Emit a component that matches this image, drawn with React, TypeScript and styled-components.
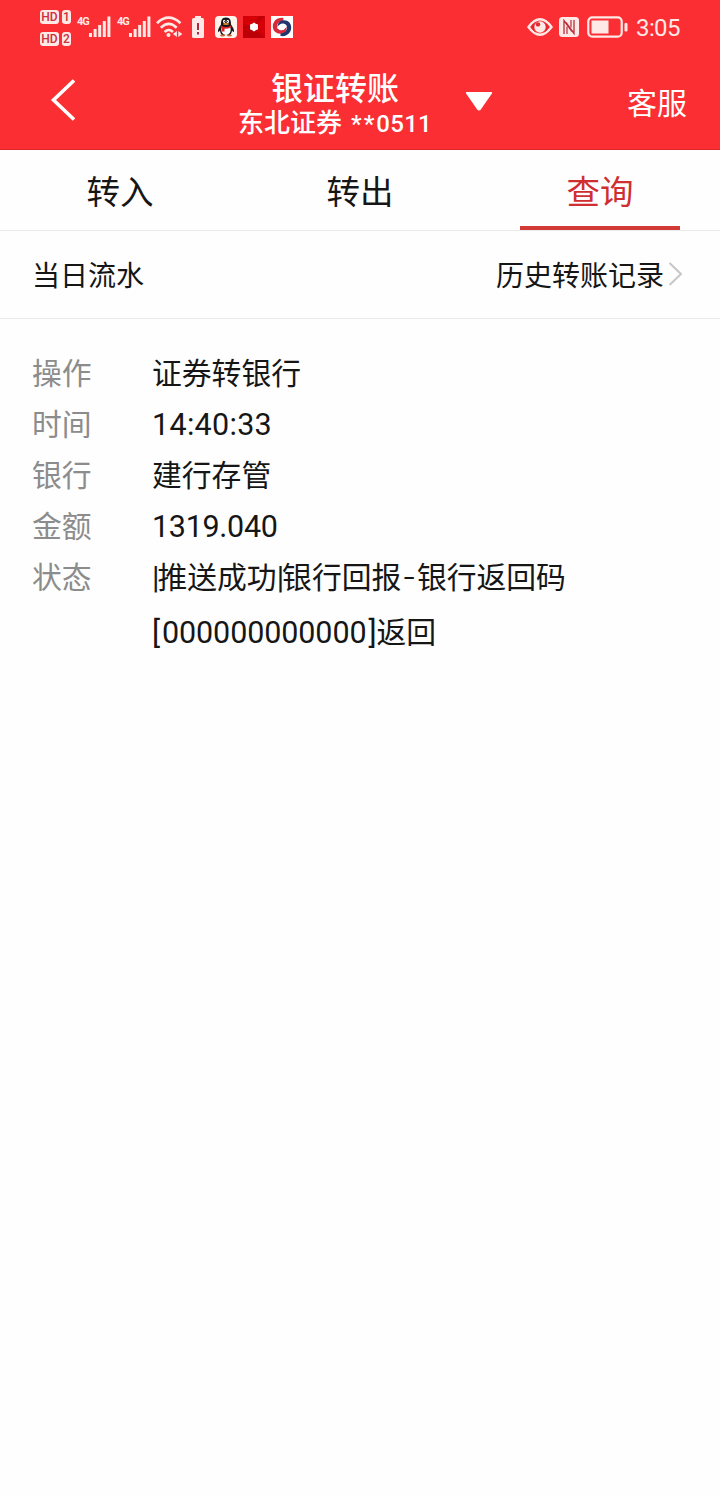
import React from "react";
import styled, { createGlobalStyle } from "styled-components";

const RED = "#fa2e33";
const PALE = "#ffe9e6";

const GlobalStyle = createGlobalStyle`
  *, *::before, *::after { box-sizing: border-box; }
  body {
    margin: 0;
    background: #fefefe;
    font-family: "Noto Sans CJK SC", "Noto Sans", sans-serif;
    color: #161616;
  }
`;

const Screen = styled.div`
  width: 720px;
  min-height: 1496px;
  background: #fefefe;
`;

const Top = styled.div`
  height: 150px;
  background: ${RED};
  border-bottom: 1px solid #d9272c;
`;

const StatusBar = styled.div`
  height: 54px;
  padding: 0 39px 0 40px;
  display: flex;
  justify-content: space-between;
`;

const StatusGroup = styled.div`
  display: flex;
  align-items: center;
  height: 54px;
`;

const Sims = styled.div`
  display: flex;
  flex-direction: column;
  gap: 8px;
  margin-top: 2px;
  width: 37px;
`;

const SimRow = styled.div`
  display: flex;
  gap: 3px;
`;

const Badge = styled.span<{ $w: number }>`
  width: ${(p) => p.$w}px;
  height: 14px;
  border-radius: 3px;
  background: ${PALE};
  color: #c9303a;
  font: 500 12px/14px Roboto, sans-serif;
  text-align: center;
`;

const Network = styled.div`
  display: flex;
  align-items: flex-start;
  height: 22px;
  width: 40px;
`;

const NetworkLabel = styled.span`
  width: 12px;
  font: 700 11px/12px Roboto, sans-serif;
  letter-spacing: -1px;
  color: ${PALE};
`;

const Icon = styled.svg<{ $ml?: number }>`
  display: block;
  flex: none;
  margin-left: ${(p) => p.$ml ?? 0}px;
`;

const Clock = styled.span`
  margin: 2px 0 0 8px;
  width: 45px;
  font: 400 24px/30px Roboto, sans-serif;
  letter-spacing: -0.6px;
  white-space: nowrap;
  color: ${PALE};
`;

const Header = styled.header`
  height: 95px;
  display: grid;
  grid-template-columns: 230px 210px 90px 1fr;
`;

const BackButton = styled.div`
  padding: 24px 0 0 50px;
`;

const Titles = styled.div`
  display: flex;
  flex-direction: column;
  align-items: center;
  font-weight: 500;
  color: #fff;
  white-space: nowrap;
`;

const Title = styled.h1`
  margin: 11px 0 0;
  font-size: 32px;
  line-height: 42px;
  font-weight: 500;
`;

const Subtitle = styled.div`
  display: flex;
  align-items: baseline;
  font-size: 26px;
  line-height: 30px;
  margin-top: -1px;
`;

const AccountNumber = styled.span`
  margin-left: 9px;
  font-family: Roboto, sans-serif;
  font-size: 24px;
  letter-spacing: 0.3px;
`;

const Mask = styled.span`
  letter-spacing: 2px;
`;

const DropButton = styled.div`
  padding: 37px 0 0 25px;
`;

const Service = styled.div`
  padding: 27px 33px 0 0;
  text-align: right;
  font-size: 30px;
  line-height: 40px;
  color: #fff;
`;

const Tabs = styled.nav`
  height: 81px;
  display: grid;
  grid-template-columns: repeat(3, 1fr);
  border-bottom: 1px solid #ebebeb;
`;

const Tab = styled.div<{ $active?: boolean }>`
  display: flex;
  justify-content: center;
  margin: 0 40px;
  padding-top: 16px;
  font-size: 33.5px;
  line-height: 48px;
  color: ${(p) => (p.$active ? "#cf2f30" : "#161616")};
  border-bottom: 4px solid ${(p) => (p.$active ? "#d23a35" : "transparent")};
`;

const Summary = styled.div`
  height: 88px;
  padding: 0 37px 2px 32px;
  display: flex;
  align-items: center;
  justify-content: space-between;
  font-size: 28px;
  border-bottom: 1px solid #ebebeb;
`;

const HistoryLink = styled.div`
  display: flex;
  align-items: center;
  gap: 4px;
`;

const Details = styled.dl`
  margin: 0;
  padding: 25px 32px 0;
`;

const DetailRow = styled.div`
  display: grid;
  grid-template-columns: 120px 430px;
  min-height: 51px;
  font-size: 29.8px;
  line-height: 55px;
`;

const Label = styled.dt`
  height: 51px;
  color: #8c8c8c;
`;

const Value = styled.dd<{ $fit?: boolean }>`
  margin: 0;
  height: ${(p) => (p.$fit ? "auto" : "51px")};
`;

const Line = styled.div`
  white-space: nowrap;
`;

const Latin = styled.span<{ $tracking?: number }>`
  font-family: Roboto, sans-serif;
  font-size: 30.5px;
  line-height: 1;
  letter-spacing: ${(p) => p.$tracking ?? 0}px;
`;

const Code = styled.span`
  margin: 0 2px;
`;

const Dash = styled.span`
  font-size: 38px;
  font-weight: 300;
  line-height: 1;
  margin: 0 1.5px;
`;

const Signal = () => (
  <Icon width="22" height="22" viewBox="0 0 22 22" fill={PALE}>
    <rect x="0" y="17" width="3" height="4" />
    <rect x="4.6" y="13" width="3" height="8" />
    <rect x="9.2" y="9" width="3" height="12" />
    <rect x="13.8" y="5" width="3" height="16" />
    <rect x="18.4" y="0.5" width="3" height="20.5" />
  </Icon>
);

const Wifi = () => (
  <Icon $ml={-1} width="27" height="22" viewBox="0 0 27 22" fill="none" stroke={PALE} strokeWidth="2.6">
    <path d="M1 7.2Q12.5-3.8 24.5 7.2" />
    <path d="M4.8 11.7Q12.7 4 20.7 11.7" />
    <path d="M8.6 16Q12.7 12 17 16" />
    <circle cx="12.5" cy="19" r="2" fill={PALE} stroke="none" />
    <path d="M20.9 15v6l-4-3zM22.3 15v6l4-3z" fill={PALE} stroke="none" />
  </Icon>
);

const LowBattery = () => (
  <Icon $ml={9} width="12" height="22" viewBox="0 0 12 22">
    <rect x="3" y="0" width="6" height="4" fill={PALE} />
    <rect y="2" width="12" height="20" rx="1.5" fill={PALE} />
    <path d="M6 7v7M6 16v2.4" stroke="#a52b48" strokeWidth="2" />
  </Icon>
);

const Penguin = () => (
  <Icon $ml={11} width="22" height="22" viewBox="0 0 22 22">
    <rect width="22" height="22" rx="4" fill="#fff5ec" />
    <path d="M11 1.5C6.500 1.500 6 5 6 8.500c-1.300 2-3 4.200-3 6.500 0 1.800 1.200.8 2-.5.3 2 1 3.500 2 4.500h8c1-1 1.700-2.500 2-4.500.8 1.300 2 2.300 2 .5 0-2.300-1.700-4.500-3-6.500 0-3.500-.5-7-5-7z" fill="#17151a" />
    <path d="M6.800 11c-1.500 4 .7 8 4.200 8s5.700-4 4.200-8z" fill="#fff" />
    <ellipse cx="9.200" cy="5.400" rx="1.200" ry="1.700" fill="#fff" />
    <ellipse cx="12.800" cy="5.400" rx="1.200" ry="1.700" fill="#fff" />
    <circle cx="9.500" cy="5.600" r=".5" fill="#111" />
    <circle cx="12.500" cy="5.600" r=".5" fill="#111" />
    <ellipse cx="11" cy="8" rx="3" ry=".9" fill="#e58a28" />
    <path d="M6 9.500q5 3 10 0l.5 1.800q-4 1.700-7 1.500v2.700H7v-3.500l-1.500-.7z" fill="#dc252a" />
    <ellipse cx="7.600" cy="19.600" rx="2.600" ry="1" fill="#c9683a" />
    <ellipse cx="14.400" cy="19.600" rx="2.600" ry="1" fill="#c9683a" />
  </Icon>
);

const RedApp = () => (
  <Icon $ml={6} width="22" height="22" viewBox="0 0 22 22">
    <rect width="22" height="22" fill="#d40007" />
    <path d="M0 22V8l11 3 5-11h6L11 11l11 11z" fill="#bd0008" />
    <path d="M11 6.600l1.800 1.200 2.200.8-.1 2.400.1 2.300-2.200.9L11 15.500l-1.800-1.300-2.200-.9.100-2.300-.1-2.400 2.200-.8z" fill="#fff" />
  </Icon>
);

const SwirlApp = () => (
  <Icon $ml={6} width="22" height="22" viewBox="0 0 22 22">
    <rect width="22" height="22" fill="#fff" />
    <path d="M12.500 2C6 1 1.800 5.500 1.800 10.500c0 4.300 3.400 7.500 7.700 7 3.500-.2 6-2.500 6-6.500-1.500 2.700-3.800 4-6 3.500C6.500 13.700 5.500 11.500 6.200 9 7 6.300 9.500 5.200 12 5.200z" fill="#d62a3b" />
    <path d="M9.500 20c6.500 1 10.700-3.500 10.700-8.500C20.200 7.200 17 4 12.500 4.300 9 4.500 6.500 7 6.500 11c1.500-2.700 3.800-4 6-3.500 3 .8 4 3 3.300 5.500-.8 2.700-3.300 3.800-6.300 4.300z" fill="#20366e" />
    <path d="M15.500 11c-1.500 2.700-3.800 4-6 3.500C8.300 14.200 7.500 13.500 7 12.800L6 16q2 1.800 4 1.400c3.500-.4 5.500-2.700 5.500-6.400z" fill="#d62a3b" />
  </Icon>
);

const Eye = () => (
  <Icon width="26" height="20" viewBox="0 0 26 20">
    <path d="M1.500 10Q13-5.500 24.500 10 13 25.500 1.500 10z" fill="none" stroke={PALE} strokeWidth="2.400" />
    <path d="M4 10Q6 6 10 4.500 5 10 8.500 15.500 5.500 13.500 4 10zM22 10Q20 6 16 4.500 21 10 17.500 15.500 20.500 13.500 22 10z" fill="#e22832" />
    <circle cx="13" cy="10" r="5.700" fill={PALE} />
    <circle cx="11" cy="7.400" r="2.200" fill="#e22832" />
  </Icon>
);

const Nfc = () => (
  <Icon $ml={6} width="20" height="20" viewBox="0 0 20 20">
    <rect width="20" height="20" rx="3.500" fill={PALE} />
    <path d="M5 17V3.500L13 14.500M7 5.500L15 16.500V3" fill="none" stroke="#b92c3a" strokeWidth="1.300" />
    <path d="M8 17V9.500M12 3v7.500" fill="none" stroke="#b92c3a" strokeWidth="1.200" />
  </Icon>
);

const Battery = () => (
  <Icon $ml={8} width="41" height="22" viewBox="0 0 41 22">
    <rect x="1.300" y="1.300" width="33.400" height="19.400" rx="4" fill="none" stroke={PALE} strokeWidth="2.200" />
    <rect x="4.500" y="4.500" width="17" height="13" fill={PALE} />
    <rect x="37.500" y="7" width="3" height="8.500" rx="1" fill={PALE} />
  </Icon>
);

const records = [
  { label: "操作", value: "证券转银行" },
  { label: "时间", value: "14:40:33", latin: true, tracking: 0.3 },
  { label: "银行", value: "建行存管" },
  { label: "金额", value: "1319.040", latin: true, tracking: -0.3 },
];

export default function App() {
  return (
    <Screen>
      <GlobalStyle />
      <Top>
        <StatusBar>
          <StatusGroup>
            <Sims>
              {["1", "2"].map((n) => (
                <SimRow key={n}>
                  <Badge $w={19}>HD</Badge>
                  <Badge $w={9}>{n}</Badge>
                </SimRow>
              ))}
            </Sims>
            <Network>
              <NetworkLabel>4G</NetworkLabel>
              <Signal />
            </Network>
            <Network>
              <NetworkLabel>4G</NetworkLabel>
              <Signal />
            </Network>
            <Wifi />
            <LowBattery />
            <Penguin />
            <RedApp />
            <SwirlApp />
          </StatusGroup>
          <StatusGroup>
            <Eye />
            <Nfc />
            <Battery />
            <Clock>3:05</Clock>
          </StatusGroup>
        </StatusBar>
        <Header>
          <BackButton>
            <Icon width="27" height="44" viewBox="0 0 27 44" fill="none" stroke="#fff" strokeWidth="3.600">
              <path d="M24 2.500L3.500 22 24 41.500" />
            </Icon>
          </BackButton>
          <Titles>
            <Title>银证转账</Title>
            <Subtitle>
              东北证券
              <AccountNumber>
                <Mask>**</Mask>0511
              </AccountNumber>
            </Subtitle>
          </Titles>
          <DropButton>
            <Icon width="28" height="21" viewBox="0 0 28 21" fill="#fff">
              <path d="M1.500 1h25q1.200.3.400 1.600L16 18.300q-2 2.400-4 0L1.100 2.600Q.3 1.300 1.500 1z" />
            </Icon>
          </DropButton>
          <Service>客服</Service>
        </Header>
      </Top>
      <Tabs>
        <Tab>转入</Tab>
        <Tab>转出</Tab>
        <Tab $active>查询</Tab>
      </Tabs>
      <Summary>
        <span>当日流水</span>
        <HistoryLink>
          历史转账记录
          <Icon width="15" height="26" viewBox="0 0 15 26" fill="none" stroke="#c6c6c6" strokeWidth="2">
            <path d="M1.500 2L13 13 1.500 24" />
          </Icon>
        </HistoryLink>
      </Summary>
      <Details>
        {records.map((r) => (
          <DetailRow key={r.label}>
            <Label>{r.label}</Label>
            <Value>{r.latin ? <Latin $tracking={r.tracking}>{r.value}</Latin> : r.value}</Value>
          </DetailRow>
        ))}
        <DetailRow>
          <Label>状态</Label>
          <Value $fit>
            <Line>
              <Latin $tracking={-2}>|</Latin>推送成功<Latin $tracking={-2}>|</Latin>银行回报<Dash>-</Dash>银行返回码
            </Line>
            <Line>
              <Latin $tracking={-0.1}>
                [<Code>000000000000</Code>]
              </Latin>
              返回
            </Line>
          </Value>
        </DetailRow>
      </Details>
    </Screen>
  );
}
